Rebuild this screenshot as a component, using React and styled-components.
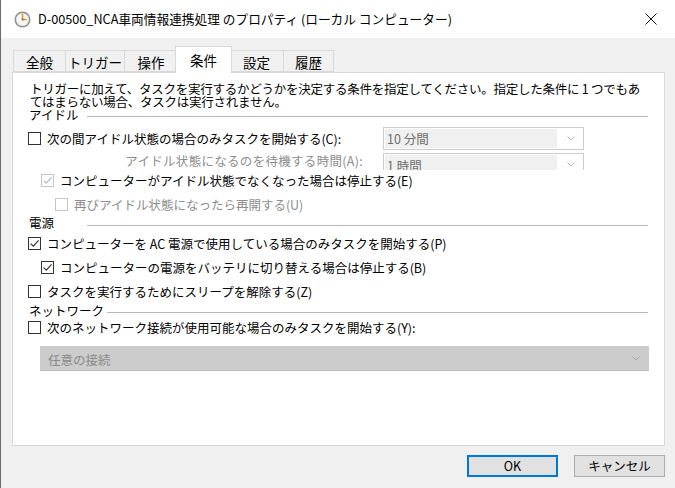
import React from "react";
import styled, { createGlobalStyle } from "styled-components";

/* ---------- global ---------- */

const GlobalStyle = createGlobalStyle`
  html, body {
    margin: 0;
    padding: 0;
    background: #f0f0f0;
  }
  body {
    font-family: "Noto Sans CJK JP", "Noto Sans", sans-serif;
    font-size: 12.5px;
    color: #000;
  }
  * {
    box-sizing: border-box;
  }
`;

/* ---------- styled components ---------- */

const Window = styled.div`
  width: 675px;
  height: 488px;
  background: #f0f0f0;
  border-left: 1px solid #6b6b6b;
  display: flex;
  flex-direction: column;
  overflow: hidden;
`;

const TitleBar = styled.div`
  height: 38px;
  background: #fff;
  display: flex;
  align-items: center;
  padding-left: 13px;
  gap: 7px;
  flex-shrink: 0;
`;

const TitleText = styled.div`
  flex: 1;
  font-size: 12.7px;
  line-height: 16px;
  white-space: nowrap;
`;

const CloseButton = styled.div`
  width: 46px;
  height: 38px;
  display: flex;
  align-items: center;
  justify-content: center;
  margin-right: 1px;
`;

const Body = styled.div`
  flex: 1;
  display: flex;
  flex-direction: column;
  padding: 8px 10px 0 11px;
`;

const TabStrip = styled.div`
  display: flex;
  align-items: flex-end;
  height: 26px;
  padding-left: 1px;
  position: relative;
  z-index: 1;
`;

const Tab = styled.div`
  width: ${({ $w, $active }) => ($active ? $w + 4 : $w)}px;
  height: ${({ $active }) => ($active ? 27 : 22)}px;
  margin-left: ${({ $active, $first }) => ($active ? -3 : $first ? 0 : -1)}px;
  margin-right: ${({ $active }) => ($active ? -2 : 0)}px;
  margin-bottom: ${({ $active }) => ($active ? -1 : 0)}px;
  border: 1px solid #d9d9d9;
  border-bottom: ${({ $active }) => ($active ? "none" : "1px solid #d9d9d9")};
  background: ${({ $active }) => ($active ? "#fff" : "#f0f0f0")};
  display: flex;
  align-items: center;
  justify-content: center;
  padding-top: ${({ $active }) => ($active ? 0 : 1)}px;
  font-size: 13.5px;
  line-height: 14px;
  position: relative;
  z-index: ${({ $active }) => ($active ? 2 : 0)};
`;

const Panel = styled.div`
  height: 374px;
  background: #fff;
  border: 1px solid #d9d9d9;
  padding: 9px 16px 0 15px;
  display: flex;
  flex-direction: column;
`;

const Description = styled.p`
  margin: 0 0 0 2px;
  line-height: 13px;
  letter-spacing: -0.25px;
  white-space: nowrap;
`;

const GroupHeader = styled.div`
  display: flex;
  align-items: center;
  height: 13px;
  margin-top: ${({ $mt }) => $mt || 0}px;
  margin-left: 1px;
`;

const GroupLabel = styled.span`
  min-width: 58px;
  padding-right: 3px;
  line-height: 13px;
  white-space: nowrap;
`;

const GroupLine = styled.div`
  flex: 1;
  height: 1px;
  background: #b9b9b9;
  margin-top: ${({ $drop }) => $drop || 0}px;
`;

const Row = styled.div`
  display: flex;
  align-items: ${({ $top }) => ($top ? "flex-start" : "center")};
  justify-content: ${({ $end }) => ($end ? "flex-end" : "flex-start")};
  height: ${({ $h }) => $h || 24}px;
  margin-top: ${({ $mt }) => $mt || 0}px;
  padding-left: ${({ $indent }) => $indent || 0}px;
  overflow: hidden;
  flex-shrink: 0;
`;

const CheckItem = styled.label`
  display: flex;
  align-items: center;
  gap: 6px;
  white-space: nowrap;
  line-height: 13px;
  color: ${({ $muted }) => ($muted ? "#8d8d8d" : "#000")};
`;

const Box = styled.span`
  width: 13px;
  height: 13px;
  flex-shrink: 0;
  border: 1px solid ${({ $disabled }) => ($disabled ? "#c5c5c5" : "#333")};
  background: #fff;
  display: flex;
  align-items: center;
  justify-content: center;
`;

const Label = styled.span`
  white-space: nowrap;
  line-height: 13px;
  color: ${({ $muted }) => ($muted ? "#8d8d8d" : "#000")};
  margin-right: 20px;
  margin-top: ${({ $mt }) => $mt || 0}px;
  letter-spacing: 0.3px;
`;

const Combo = styled.div`
  width: ${({ $w }) => ($w ? `${$w}px` : "auto")};
  height: ${({ $h }) => $h || 23}px;
  flex-shrink: 0;
  margin-left: ${({ $ml }) => ($ml === undefined ? "auto" : `${$ml}px`)};
  margin-right: ${({ $mr }) => $mr || 0}px;
  margin-top: ${({ $mt }) => $mt || 0}px;
  border: 1px solid #cccccc;
  background: ${({ $fill }) => $fill || "#fff"};
  display: flex;
  align-items: stretch;
`;

const ComboValue = styled.div`
  flex: 1;
  margin: ${({ $flat }) => ($flat ? 0 : "1px")};
  background: ${({ $flat }) => ($flat ? "transparent" : "#f0f0f0")};
  color: ${({ $color }) => $color || "#6d6d6d"};
  display: flex;
  align-items: center;
  padding-left: ${({ $pad }) => $pad || 2}px;
  padding-top: 1px;
  white-space: nowrap;
  line-height: 13px;
`;

const ComboArrow = styled.div`
  width: 25px;
  display: flex;
  align-items: center;
  justify-content: center;
  flex-shrink: 0;
`;

const WideCombo = styled(Combo)`
  margin-left: 12px;
  margin-right: -1px;
  margin-top: 9px;
  border-color: #cccccc;
  border-bottom-color: #bdbdbd;
`;

const Footer = styled.div`
  display: flex;
  justify-content: flex-end;
  gap: 16px;
  padding-top: 9px;
`;

const Button = styled.button`
  width: 91px;
  height: 22px;
  font-family: inherit;
  font-size: 12.5px;
  line-height: 14px;
  padding: 0;
  background: #e1e1e1;
  color: #000;
  border: ${({ $default }) => ($default ? "2px solid #0078d7" : "1px solid #adadad")};
`;

/* ---------- icons ---------- */

const ClockIcon = () => (
  <svg width="17" height="17" viewBox="0 0 17 17">
    <circle cx="8.5" cy="8.5" r="8" fill="#8f8f8f" />
    <circle cx="8.5" cy="8.5" r="6.6" fill="#e4e4e4" />
    <circle cx="8.5" cy="8.5" r="5.6" fill="#f7f7f7" />
    <path d="M8.5 3.6 V8.5 H12.2" fill="none" stroke="#d49a2a" strokeWidth="1.6" strokeLinecap="round" />
    <circle cx="8.5" cy="8.5" r="0.9" fill="#7a6a50" />
  </svg>
);

const CloseIcon = () => (
  <svg width="12" height="12" viewBox="0 0 12 12">
    <path d="M0.5 0.5 L11.5 11.5 M11.5 0.5 L0.5 11.5" stroke="#111" strokeWidth="1" />
  </svg>
);

const Check = ({ color }) => (
  <svg width="11" height="11" viewBox="0 0 11 11">
    <path d="M1.6 5.6 L4.3 8.2 L9.6 2.4" fill="none" stroke={color} strokeWidth="1.2" />
  </svg>
);

const Chevron = ({ color = "#b5b5b5" }) => (
  <svg width="8" height="5" viewBox="0 0 8 5">
    <path d="M0.5 0.5 L4 4 L7.5 0.5" fill="none" stroke={color} strokeWidth="1" />
  </svg>
);

const CheckBox = ({ checked, disabled, muted, children }) => (
  <CheckItem $muted={muted}>
    <Box $disabled={disabled}>
      {checked && <Check color={disabled ? "#b8b8b8" : "#333"} />}
    </Box>
    {children}
  </CheckItem>
);

/* ---------- data ---------- */

const tabs = [
  { label: "全般", w: 53 },
  { label: "トリガー", w: 60 },
  { label: "操作", w: 54 },
  { label: "条件", w: 53 },
  { label: "設定", w: 55 },
  { label: "履歴", w: 51 },
];

/* ---------- component ---------- */

const App = () => {
  const active = "条件";

  return (
    <>
      <GlobalStyle />
      <Window>
        <TitleBar>
          <ClockIcon />
          <TitleText>D-00500_NCA車両情報連携処理 のプロパティ (ローカル コンピューター)</TitleText>
          <CloseButton>
            <CloseIcon />
          </CloseButton>
        </TitleBar>

        <Body>
          {/* TABS */}
          <TabStrip>
            {tabs.map((t, i) => (
              <Tab key={t.label} $w={t.w} $first={i === 0} $active={t.label === active}>
                {t.label}
              </Tab>
            ))}
          </TabStrip>

          {/* CONDITIONS PANEL */}
          <Panel>
            <Description>
              トリガーに加えて、タスクを実行するかどうかを決定する条件を指定してください。指定した条件に 1 つでもあ
              <br />
              てはまらない場合、タスクは実行されません。
            </Description>

            {/* IDLE */}
            <GroupHeader>
              <GroupLabel>アイドル</GroupLabel>
              <GroupLine $drop={4} />
            </GroupHeader>
            <Row $h={24} $mt={5}>
              <CheckBox>次の間アイドル状態の場合のみタスクを開始する(C):</CheckBox>
              <Combo $w={201} $mr={64}>
                <ComboValue>10 分間</ComboValue>
                <ComboArrow>
                  <Chevron />
                </ComboArrow>
              </Combo>
            </Row>
            <Row $h={20} $end $top>
              <Label $muted $mt={4}>アイドル状態になるのを待機する時間(A):</Label>
              <Combo $w={201} $ml={0} $mr={64} $mt={3}>
                <ComboValue>1 時間</ComboValue>
                <ComboArrow>
                  <Chevron />
                </ComboArrow>
              </Combo>
            </Row>
            <Row $h={20} $indent={13}>
              <CheckBox checked disabled>
                コンピューターがアイドル状態でなくなった場合は停止する(E)
              </CheckBox>
            </Row>
            <Row $h={24} $mt={2} $indent={27}>
              <CheckBox disabled muted>
                再びアイドル状態になったら再開する(U)
              </CheckBox>
            </Row>

            {/* POWER */}
            <GroupHeader>
              <GroupLabel>電源</GroupLabel>
              <GroupLine $drop={6} />
            </GroupHeader>
            <Row $h={24} $mt={2}>
              <CheckBox checked>コンピューターを AC 電源で使用している場合のみタスクを開始する(P)</CheckBox>
            </Row>
            <Row $h={24} $indent={13}>
              <CheckBox checked>コンピューターの電源をバッテリに切り替える場合は停止する(B)</CheckBox>
            </Row>
            <Row $h={24}>
              <CheckBox>タスクを実行するためにスリープを解除する(Z)</CheckBox>
            </Row>

            {/* NETWORK */}
            <GroupHeader $mt={1}>
              <GroupLabel>ネットワーク</GroupLabel>
              <GroupLine $drop={4} />
            </GroupHeader>
            <Row $h={20}>
              <CheckBox>次のネットワーク接続が使用可能な場合のみタスクを開始する(Y):</CheckBox>
            </Row>
            <WideCombo $h={25} $fill="#cccccc">
              <ComboValue $flat $pad={7} $color="#8a8a8a">
                任意の接続
              </ComboValue>
              <ComboArrow>
                <Chevron color="#a8a8a8" />
              </ComboArrow>
            </WideCombo>
          </Panel>

          {/* BUTTONS */}
          <Footer>
            <Button $default>OK</Button>
            <Button>キャンセル</Button>
          </Footer>
        </Body>
      </Window>
    </>
  );
};

export default App;
